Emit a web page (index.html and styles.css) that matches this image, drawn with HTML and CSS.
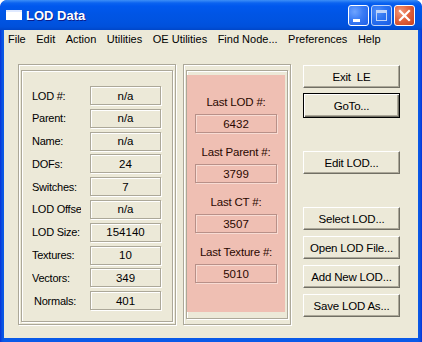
FILE: index.html
```html
<!DOCTYPE html>
<html>
<head>
<meta charset="utf-8">
<title>LOD Data</title>
<link rel="stylesheet" href="styles.css">
</head>
<body>
<div class="window">
  <div class="titlebar">
    <span class="app-icon"></span>
    <span class="title">LOD Data</span>
    <div class="caption-btns">
      <span class="cbtn min"><svg width="21" height="21" viewBox="0 0 21 21"><rect x="5" y="14" width="7" height="3" fill="#fff"/></svg></span>
      <span class="cbtn max"><svg width="21" height="21" viewBox="0 0 21 21"><rect x="5.5" y="5.5" width="10" height="10" fill="none" stroke="#fff" stroke-width="1"/><rect x="5" y="5" width="11" height="3" fill="#fff"/></svg></span>
      <span class="cbtn close"><svg width="21" height="21" viewBox="0 0 21 21"><path d="M6 6 L15 15 M15 6 L6 15" stroke="#fff" stroke-width="2.2" stroke-linecap="square"/></svg></span>
    </div>
  </div>
  <div class="frame">
    <div class="menubar">
      <span class="menu-item">File</span>
      <span class="menu-item">Edit</span>
      <span class="menu-item">Action</span>
      <span class="menu-item">Utilities</span>
      <span class="menu-item">OE Utilities</span>
      <span class="menu-item">Find Node...</span>
      <span class="menu-item">Preferences</span>
      <span class="menu-item">Help</span>
    </div>
    <div class="client">
      <div class="group left-group">
        <div class="group inner left-inner">
          <div class="row"><span class="label">LOD #:</span><span class="value">n/a</span></div>
          <div class="row"><span class="label">Parent:</span><span class="value">n/a</span></div>
          <div class="row"><span class="label">Name:</span><span class="value">n/a</span></div>
          <div class="row"><span class="label">DOFs:</span><span class="value">24</span></div>
          <div class="row"><span class="label">Switches:</span><span class="value">7</span></div>
          <div class="row"><span class="label">LOD Offset:</span><span class="value">n/a</span></div>
          <div class="row"><span class="label">LOD Size:</span><span class="value">154140</span></div>
          <div class="row"><span class="label">Textures:</span><span class="value">10</span></div>
          <div class="row"><span class="label">Vectors:</span><span class="value">349</span></div>
          <div class="row"><span class="label label-indent">Normals:</span><span class="value">401</span></div>
        </div>
      </div>
      <div class="group mid-group">
        <div class="group inner mid-inner">
          <div class="pink">
            <div class="last-block"><div class="last-label">Last LOD #:</div><div class="last-value">6432</div></div>
            <div class="last-block"><div class="last-label">Last Parent #:</div><div class="last-value">3799</div></div>
            <div class="last-block"><div class="last-label">Last CT #:</div><div class="last-value">3507</div></div>
            <div class="last-block"><div class="last-label">Last Texture #:</div><div class="last-value">5010</div></div>
          </div>
        </div>
      </div>
      <div class="buttons">
        <button class="btn btn-exit">Exit&nbsp; LE</button>
        <button class="btn btn-default">GoTo...</button>
        <button class="btn btn-edit">Edit LOD...</button>
        <button class="btn btn-select">Select LOD...</button>
        <button class="btn btn-next">Open LOD File...</button>
        <button class="btn btn-next">Add New LOD...</button>
        <button class="btn btn-next">Save LOD As...</button>
      </div>
    </div>
  </div>
</div>
</body>
</html>
```

FILE: styles.css
```css
* { box-sizing: border-box; }

html, body {
  margin: 0;
  padding: 0;
  background: #ffffff;
}

body {
  font-family: "Liberation Sans", Arial, sans-serif;
  font-size: 11px;
  color: #000;
}

.window {
  width: 422px;
  height: 342px;
  background: linear-gradient(90deg, #0831D9 0px, #0A52E0 2px, #0A5AE8 4px, #0A5AE8 calc(100% - 4px), #0A52E0 calc(100% - 2px), #0831D9 100%);
  border-radius: 7px 7px 0 0;
  display: flex;
  flex-direction: column;
  overflow: hidden;
}

.titlebar {
  height: 30px;
  flex: none;
  display: flex;
  align-items: center;
  background: linear-gradient(180deg, #3D8FF7 0px, #0B63F0 3px, #0058EE 6px, #0055E5 14px, #0053E0 22px, #0050DA 27px, #0046C8 30px);
  border-radius: 7px 7px 0 0;
}

.app-icon {
  width: 16px;
  height: 10px;
  margin-left: 6px;
  background: #ffffff;
  border-top: 2px solid #dfe9ff;
}

.title {
  margin-left: 4px;
  color: #ffffff;
  font-family: "Liberation Sans", Arial, sans-serif;
  font-weight: bold;
  font-size: 13px;
  text-shadow: 1px 1px 0 #0A1E8C;
}

.caption-btns {
  margin-left: auto;
  margin-right: 7px;
  display: flex;
  gap: 2px;
}

.cbtn {
  width: 21px;
  height: 21px;
  border: 1px solid #ffffff;
  border-radius: 3px;
  display: flex;
  align-items: center;
  justify-content: center;
  overflow: hidden;
}

.cbtn svg { display: block; margin: -1px; }

.min, .max {
  background: radial-gradient(circle at 30% 30%, #6FA4FF 0%, #3A7CF5 45%, #1D5FE8 100%);
}

.max { opacity: 0.75; }

.close {
  background: radial-gradient(circle at 30% 30%, #F39A7C 0%, #E2643F 45%, #C63F1E 100%);
}

.frame {
  flex: 1;
  margin: 0 4px 4px 4px;
  background: #ECE9D8;
  display: flex;
  flex-direction: column;
}

.menubar {
  height: 17px;
  flex: none;
  display: flex;
  align-items: center;
  gap: 10.5px;
  padding-left: 4px;
  font-size: 11px;
}

.client {
  flex: 1;
  display: flex;
  align-items: flex-start;
  padding: 17px 0 0 14px;
}

.group {
  border: 1px solid #ACA899;
  box-shadow: 1px 1px 0 #ffffff, inset 1px 1px 0 #ffffff;
}

.left-group {
  width: 158px;
  height: 261px;
  padding: 5px 2px 2px 2px;
  display: flex;
}

.inner {
  flex: 1;
}

.left-inner {
  padding: 15px 10px 0 10px;
  display: flex;
  flex-direction: column;
  gap: 3.8px;
}

.row {
  height: 19px;
  display: flex;
  align-items: center;
}

.label {
  width: 49px;
  margin-right: 9px;
  white-space: nowrap;
  overflow: hidden;
  font-size: 11px;
  letter-spacing: -0.25px;
}

.label-indent { padding-left: 2px; }

.value {
  width: 71px;
  height: 19px;
  display: flex;
  align-items: center;
  justify-content: center;
  border: 1px solid #ACA899;
  box-shadow: 1px 1px 0 #ffffff, inset 1px 1px 0 #ffffff;
  font-size: 11.5px;
}

.mid-group {
  margin-left: 7px;
  width: 108px;
  height: 261px;
  padding: 5px 2px 5px 2px;
  display: flex;
}

.mid-inner {
  display: flex;
  flex-direction: column;
}

.pink {
  flex: 1;
  margin: 4px 2px 6px 0;
  background: #EFBFB3;
  padding-top: 20px;
  display: flex;
  flex-direction: column;
  gap: 12px;
  color: #2A0800;
}

.last-block {
  display: flex;
  flex-direction: column;
  align-items: stretch;
}

.last-label {
  height: 14px;
  line-height: 14px;
  text-align: center;
  font-size: 11.5px;
  letter-spacing: -0.2px;
  white-space: nowrap;
}

.last-value {
  width: 82px;
  height: 19px;
  margin: 5px 0 0 8px;
  display: flex;
  align-items: center;
  justify-content: center;
  border: 1px solid #B89088;
  box-shadow: 1px 1px 0 #F8DCD4, inset 1px 1px 0 #F8DCD4;
  font-size: 11.5px;
}

.buttons {
  margin-left: 12px;
  width: 97px;
  display: flex;
  flex-direction: column;
}

.btn {
  width: 97px;
  height: 23px;
  margin: 0;
  padding: 0;
  font-family: "Liberation Sans", Arial, sans-serif;
  font-size: 11.5px;
  letter-spacing: -0.2px;
  color: #000;
  background: #ECE9D8;
  border: 1px solid;
  border-color: #ffffff #716F64 #716F64 #ffffff;
  box-shadow: inset -1px -1px 0 #ACA899;
  border-radius: 0;
}

.btn-exit { margin-top: 1px; }

.btn-default {
  margin-top: 5px;
  height: 25px;
  border: 1px solid #000;
  box-shadow: inset 1px 1px 0 #ffffff, inset -1px -1px 0 #716F64, inset -2px -2px 0 #ACA899;
}

.btn-edit { margin-top: 33px; }

.btn-select { margin-top: 33px; }

.btn-next { margin-top: 6px; }
```
